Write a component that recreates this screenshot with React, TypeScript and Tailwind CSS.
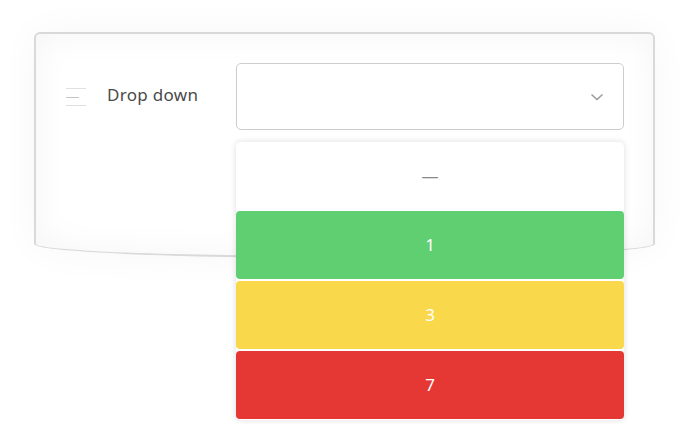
import React from 'react';

const OPTIONS = [
  { label: '1', bg: 'bg-[#5fcf71]' },
  { label: '3', bg: 'bg-[#f9d84b]' },
  { label: '7', bg: 'bg-[#e53733]' },
];

const HamburgerIcon: React.FC = () => (
  <svg width="22" height="20" viewBox="0 0 22 20" className="shrink-0">
    <line x1="0" y1="1.5" x2="20" y2="1.5" stroke="#e0e0e0" strokeWidth="1" />
    <line x1="0" y1="10.5" x2="13" y2="10.5" stroke="#c4c4c4" strokeWidth="1" />
    <line x1="0" y1="18.5" x2="20" y2="18.5" stroke="#e0e0e0" strokeWidth="1" />
  </svg>
);

const Chevron: React.FC = () => (
  <svg width="14" height="8" viewBox="0 0 14 8">
    <polyline points="1.5,1.5 7,6.5 12.5,1.5" fill="none" stroke="#9c9c9c" strokeWidth="1.6" />
  </svg>
);

export default function App() {
  return (
    <div className="relative w-[685px] h-[424px] bg-white overflow-hidden font-['Noto_Sans',sans-serif]">
      <div className="pl-[34px] pt-[32px]">
        {/* Card */}
        <div className="w-[621px] h-[226px] bg-white border-2 border-[#d9d9d9] rounded-t-[6px] rounded-bl-[50%_14px] rounded-br-[50%_14px] shadow-[0_0_40px_rgba(0,0,0,0.035),inset_0_0_36px_rgba(0,0,0,0.045)]">
          <div className="flex items-start pt-[29px] pl-[30px]">
            <div className="flex items-center h-[67px] w-[170px]">
              <HamburgerIcon />
              <span className="ml-[19px] -mt-[3px] text-[17px] text-[#4a4a4a] tracking-[0.3px]">Drop down</span>
            </div>
            <div className="w-[388px] h-[67px] bg-white border border-[#cdcdcd] rounded-[5px] flex items-center justify-end pr-[19px]">
              <Chevron />
            </div>
          </div>
        </div>
      </div>

      {/* Open menu */}
      <div className="absolute left-[236px] top-[142px] w-[388px] bg-white rounded-[5px] py-px shadow-[0_0_6px_rgba(0,0,0,0.14)] flex flex-col gap-[2px]">
        <div className="h-[66px] flex items-center justify-center text-[#888] text-[17px]">—</div>
        {OPTIONS.map(o => (
          <div key={o.label} className={`h-[68px] ${o.bg} rounded-[4px] flex items-center justify-center text-white text-[17px]`}>
            {o.label}
          </div>
        ))}
      </div>
    </div>
  );
}
